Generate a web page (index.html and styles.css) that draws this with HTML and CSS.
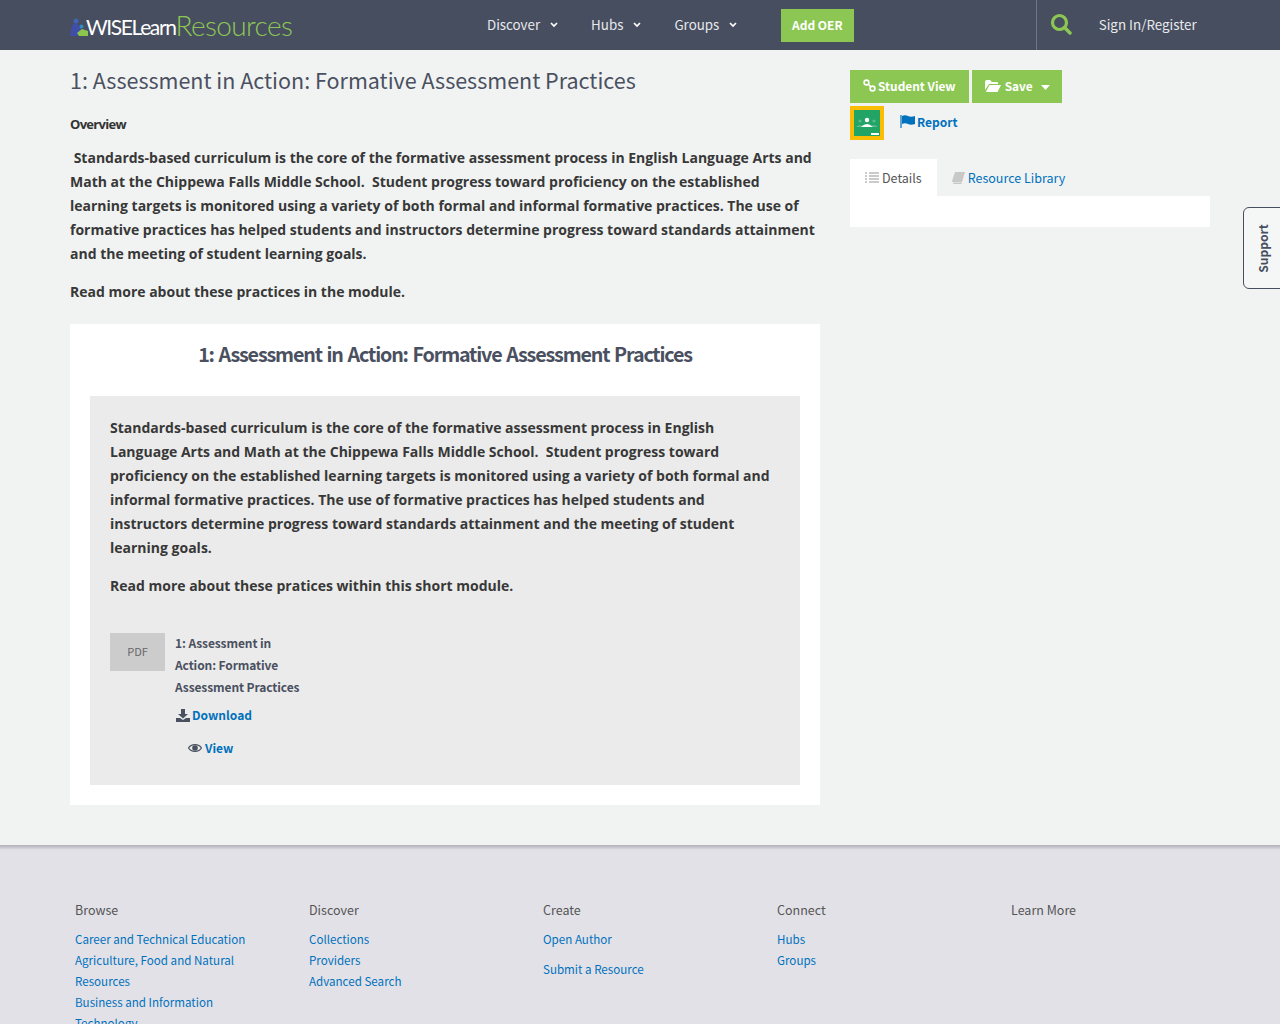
FILE: index.html
```html
<!DOCTYPE html>
<html lang="en">
<head>
    <meta charset="UTF-8">
    <title>1: Assessment in Action: Formative Assessment Practices</title>
    <link rel="stylesheet" href="styles.css">
</head>
<body>

    <!-- Top navigation -->
    <header class="topbar">
        <a class="logo" href="#">
            <svg class="logo-mark" width="18" height="20" viewBox="0 0 18 20">
                <circle cx="6" cy="3" r="2.6" fill="#3f63b5"/>
                <path d="M0 18 Q1 9 3 6.5 Q6 4.5 8.5 7 L11 12 L8 18 Z" fill="#3f4fa8"/>
                <circle cx="11.5" cy="8.5" r="2" fill="#2c8fc0"/>
                <path d="M7 15 L12 11 L18 13 V18 H9 Z" fill="#8dc64f"/>
            </svg>
            <span class="logo-wise">WISELearn</span><span class="logo-res">Resources</span>
        </a>
        <nav class="mainnav">
            <a href="#">Discover <svg class="chev" width="8" height="6" viewBox="0 0 8 6"><path d="M1 1 L4 4 L7 1" fill="none" stroke="#fff" stroke-width="1.7"/></svg></a>
            <a href="#">Hubs <svg class="chev" width="8" height="6" viewBox="0 0 8 6"><path d="M1 1 L4 4 L7 1" fill="none" stroke="#fff" stroke-width="1.7"/></svg></a>
            <a href="#">Groups <svg class="chev" width="8" height="6" viewBox="0 0 8 6"><path d="M1 1 L4 4 L7 1" fill="none" stroke="#fff" stroke-width="1.7"/></svg></a>
        </nav>
        <a class="btn add-oer" href="#">Add OER</a>
        <div class="topbar-right">
            <svg width="22" height="22" viewBox="0 0 22 22"><circle cx="9.5" cy="9.5" r="7" fill="none" stroke="#8dc753" stroke-width="3.2"/><path d="M14.5 14.5 L20 20" stroke="#8dc753" stroke-width="3.4" stroke-linecap="round"/></svg>
            <a class="signin" href="#">Sign In/Register</a>
        </div>
    </header>

    <div class="page">
        <main class="content">
            <h1>1: Assessment in Action: Formative Assessment Practices</h1>
            <h5>Overview</h5>
            <p class="lead">&nbsp;Standards-based curriculum is the core of the formative assessment process in English Language Arts and Math at the Chippewa Falls Middle School.&nbsp; Student progress toward proficiency on the established learning targets is monitored using a variety of both formal and informal formative practices. The use of formative practices has helped students and instructors determine progress toward standards attainment and the meeting of student learning goals.</p>
            <p class="lead">Read more about these practices in the module.</p>

            <section class="module">
                <h2>1: Assessment in Action: Formative Assessment Practices</h2>
                <div class="module-body">
                    <p class="lead">Standards-based curriculum is the core of the formative assessment process in English Language Arts and Math at the Chippewa Falls Middle School.&nbsp; Student progress toward proficiency on the established learning targets is monitored using a variety of both formal and informal formative practices. The use of formative practices has helped students and instructors determine progress toward standards attainment and the meeting of student learning goals.</p>
                    <p class="lead">Read more about these pratices within this short module.</p>
                    <div class="file">
                        <div class="file-type">PDF</div>
                        <div class="file-info">
                            <div class="file-name">1: Assessment in Action: Formative Assessment Practices</div>
                            <div class="file-dl">
                                <svg width="14" height="13" viewBox="0 0 14 13"><path d="M5 0 H9 V5 H12 L7 9.5 L2 5 H5 Z M0 9 H4 L7 11 L10 9 H14 V13 H0 Z" fill="#4a5060"/></svg>
                                <a href="#">Download</a>
                            </div>
                            <div class="file-view">
                                <svg width="14" height="10" viewBox="0 0 14 10"><path d="M0.5 5 C3 0.5 11 0.5 13.5 5 C11 9.5 3 9.5 0.5 5 Z" fill="none" stroke="#4a5060" stroke-width="1.2"/><circle cx="7" cy="5" r="2.8" fill="#4a5060"/></svg>
                                <a href="#">View</a>
                            </div>
                        </div>
                    </div>
                </div>
            </section>
        </main>

        <aside class="sidebar">
            <div class="actions">
                <a class="btn" href="#">
                    <svg width="13" height="13" viewBox="0 0 13 13"><circle cx="3.5" cy="3.5" r="2.4" fill="none" stroke="#fff" stroke-width="1.6"/><circle cx="9.5" cy="9.5" r="2.4" fill="none" stroke="#fff" stroke-width="1.6"/><path d="M5 5 L8 8" stroke="#fff" stroke-width="1.6"/></svg>
                    Student View
                </a>
                <a class="btn btn-save" href="#">
                    <svg width="16" height="12" viewBox="0 0 16 12"><path d="M0 2 Q0 0 2 0 H5 L7 2 H12 Q13 2 13 3 V4 H4 L0 10 Z M4.5 5 H16 L12.5 12 H0.8 Z" fill="#fff"/></svg>
                    <span>Save</span>
                    <svg class="caret" width="9" height="5" viewBox="0 0 9 5"><path d="M0 0 H9 L4.5 5 Z" fill="#fff"/></svg>
                </a>
            </div>
            <div class="share">
                <div class="classroom">
                    <svg width="26" height="26" viewBox="0 0 26 26">
                        <rect width="26" height="26" fill="#21a465"/>
                        <circle cx="6" cy="11" r="1.6" fill="#57bb8a"/><circle cx="20" cy="11" r="1.6" fill="#57bb8a"/>
                        <path d="M2 17 Q6 13 10 17 Z M16 17 Q20 13 24 17 Z" fill="#57bb8a"/>
                        <circle cx="13" cy="10" r="2.2" fill="#fff"/>
                        <path d="M7 17 Q13 11 19 17 Z" fill="#fff"/>
                        <rect x="17" y="23" width="8" height="2" fill="#fff"/>
                    </svg>
                </div>
                <a class="report" href="#">
                    <svg width="15" height="13" viewBox="0 0 15 13"><path d="M1 0 V13" stroke="#0071bc" stroke-width="1.2"/><path d="M2 1 Q5 -0.5 8 1 T15 1 V9 Q11 10.5 8 9 T2 9 Z" fill="#0071bc"/></svg>
                    Report
                </a>
            </div>
            <div class="tabs">
                <a class="tab active" href="#">
                    <svg width="14" height="11" viewBox="0 0 14 11"><path d="M0 1 H2 M4 1 H14 M0 4 H2 M4 4 H14 M0 7 H2 M4 7 H14 M0 10 H2 M4 10 H14" stroke="#bbb" stroke-width="1.6"/></svg>
                    Details
                </a>
                <a class="tab" href="#">
                    <svg width="13" height="12" viewBox="0 0 13 12"><path d="M3 0 H13 L10 10 H1 Q0 10 0 9 Z M1 10.5 H10 L9.6 12 H1.5 Z" fill="#c8c8c8"/></svg>
                    Resource Library
                </a>
            </div>
            <div class="tab-panel"></div>
        </aside>
    </div>

    <a class="support" href="#"><span>Support</span></a>

    <footer class="footer">
        <div class="footer-col">
            <h6>Browse</h6>
            <ul>
                <li><a href="#">Career and Technical Education</a></li>
                <li><a href="#">Agriculture, Food and Natural Resources</a></li>
                <li><a href="#">Business and Information Technology</a></li>
            </ul>
        </div>
        <div class="footer-col">
            <h6>Discover</h6>
            <ul>
                <li><a href="#">Collections</a></li>
                <li><a href="#">Providers</a></li>
                <li><a href="#">Advanced Search</a></li>
            </ul>
        </div>
        <div class="footer-col">
            <h6>Create</h6>
            <ul class="spaced">
                <li><a href="#">Open Author</a></li>
                <li><a href="#">Submit a Resource</a></li>
            </ul>
        </div>
        <div class="footer-col">
            <h6>Connect</h6>
            <ul>
                <li><a href="#">Hubs</a></li>
                <li><a href="#">Groups</a></li>
            </ul>
        </div>
        <div class="footer-col">
            <h6>Learn More</h6>
        </div>
    </footer>

</body>
</html>
```

FILE: styles.css
```css
html, body {
    height: 1024px;
    overflow: hidden;
}
body {
    margin: 0;
    font-family: "Noto Sans CJK JP", "Noto Sans", sans-serif;
    font-size: 12.5px;
    background-color: #f1f3f3;
    color: #4a5060;
}
a {
    color: #0071bc;
    text-decoration: none;
}

/* Top bar */
.topbar {
    display: flex;
    align-items: center;
    height: 50px;
    padding-left: 70px;
    background-color: #474e60;
}
.logo {
    display: flex;
    align-items: center;
    width: 417px;
    height: 50px;
}
.logo-mark {
    flex: none;
    margin-top: 5px;
}
.logo-wise {
    font-family: Lato, sans-serif;
    font-size: 21px;
    color: #fff;
    letter-spacing: -1.4px;
    margin-top: 3px;
    margin-left: -2px;
}
.logo-res {
    font-family: Lato, sans-serif;
    font-size: 28px;
    font-weight: 300;
    color: #8dc753;
    letter-spacing: -0.6px;
    margin-top: -1px;
}
.mainnav {
    display: flex;
    width: 294px;
}
.mainnav a {
    display: flex;
    align-items: center;
    color: #e8e9ec;
    font-size: 13.35px;
    margin-right: 33px;
    padding-bottom: 2px;
}
.chev {
    margin-left: 10px;
    margin-top: 2px;
}
.btn {
    display: inline-flex;
    align-items: center;
    gap: 2px;
    height: 33px;
    padding: 0 13px 2px;
    box-sizing: border-box;
    background-color: #8dc753;
    color: #fff;
    font-size: 11.9px;
    font-weight: 700;
}
.add-oer {
    padding: 0 11px 2px;
    font-size: 12px;
}
.topbar-right {
    display: flex;
    align-items: center;
    margin-left: 182px;
    padding-left: 14px;
    height: 50px;
    border-left: 1px solid #70757f;
}
.topbar-right svg {
    margin-bottom: 2px;
    margin-left: -1px;
}
.signin {
    margin-left: 27px;
    margin-bottom: 3px;
    font-size: 13.4px;
    color: #e8e9ec;
}

/* Page columns */
.page {
    display: flex;
    height: 795px;
    padding: 0 70px;
    box-sizing: border-box;
}
.content {
    width: 750px;
    margin-right: 30px;
}
h1 {
    margin: 14px 0 0;
    font-size: 21.5px;
    line-height: 31px;
    font-weight: 400;
    color: #4a5060;
}
h5 {
    margin: 20px 0 13px;
    font-family: "Open Sans", sans-serif;
    font-size: 13px;
    line-height: 18px;
    font-weight: 700;
    letter-spacing: -0.7px;
    color: #333;
}
.lead {
    margin: 0 0 14px;
    font-family: "Open Sans", sans-serif;
    font-size: 14px;
    line-height: 24px;
    font-weight: 700;
    color: #383838;
}
.module {
    margin-top: 20px;
    padding: 19px 20px 20px;
    background-color: #fff;
}
h2 {
    margin: 0 0 31px;
    font-size: 19.7px;
    line-height: 22px;
    font-weight: 700;
    text-align: center;
    letter-spacing: -1.15px;
    word-spacing: 1.4px;
    color: #4a5060;
}
.module-body {
    padding: 20px 20px 26px;
    background-color: #ebebeb;
}
.file {
    display: flex;
    margin-top: 35px;
}
.file-type {
    width: 55px;
    height: 38px;
    line-height: 36px;
    background-color: #ccc;
    text-align: center;
    font-size: 11px;
    color: #666;
}
.file-info {
    width: 135px;
    margin: -1px 0 0 10px;
    font-size: 12px;
    font-weight: 700;
}
.file-name {
    line-height: 22px;
    letter-spacing: -0.1px;
}
.file-dl {
    display: flex;
    align-items: center;
    gap: 2px;
    margin: 6px 0 0 1px;
    line-height: 22px;
}
.file-view {
    display: flex;
    align-items: center;
    gap: 3px;
    margin: 11px 0 0 13px;
    line-height: 22px;
}

/* Sidebar */
.sidebar {
    width: 360px;
}
.actions {
    display: flex;
    gap: 3px;
    margin-top: 20px;
}
.btn-save {
    gap: 4px;
    padding-right: 12px;
}
.btn-save span {
    margin-right: 4px;
}
.caret {
    margin-top: 3px;
}
.share {
    display: flex;
    align-items: center;
    margin-top: 3px;
}
.classroom {
    width: 26px;
    height: 26px;
    border: 4px solid #fbbc05;
    margin-right: 16px;
}
.classroom svg {
    display: block;
}
.report {
    display: flex;
    align-items: center;
    gap: 2px;
    margin-bottom: 4px;
    font-size: 12px;
    font-weight: 700;
}
.tabs {
    display: flex;
    margin-top: 19px;
}
.tab {
    display: flex;
    align-items: center;
    gap: 3px;
    height: 37px;
    padding: 0 15px;
}
.tab.active {
    background-color: #fff;
    color: #555;
}
.tab-panel {
    height: 31px;
    background-color: #fff;
}

/* Support tab on the right edge */
.support {
    position: absolute;
    top: 207px;
    right: -1px;
    width: 36px;
    height: 80px;
    display: flex;
    align-items: center;
    justify-content: center;
    border: 1px solid #474e60;
    border-radius: 6px 0 0 6px;
    background-color: #f5f6f6;
    color: #474e60;
    font-size: 12px;
    font-weight: 700;
}
.support span {
    transform: rotate(-90deg);
}

/* Footer */
.footer {
    display: flex;
    height: 179px;
    padding: 55px 75px 0;
    box-sizing: border-box;
    background-color: #e2e1e8;
    background-image: linear-gradient(rgba(0, 0, 0, 0.22), rgba(0, 0, 0, 0) 5px);
    font-size: 11.6px;
}
.footer-col {
    flex: none;
    width: 234px;
}
h6 {
    margin: 0 0 9px;
    font-size: 12.5px;
    line-height: 20px;
    font-weight: 400;
    color: #555;
}
.footer ul {
    list-style: none;
    margin: 0;
    padding: 0;
    width: 190px;
    line-height: 21px;
}
.footer ul.spaced {
    margin-top: 2px;
}
.footer ul.spaced li {
    margin-bottom: 9px;
}
```
